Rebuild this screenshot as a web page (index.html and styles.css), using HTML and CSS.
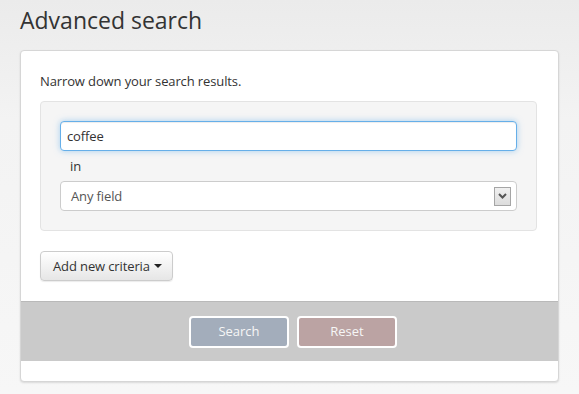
FILE: index.html
```html
<!DOCTYPE html>
<html>
<head>
<meta charset="utf-8">
<link rel="stylesheet" href="styles.css">
</head>
<body>
<h1 class="title">Advanced search</h1>
<div class="card">
  <div class="card-body">
    <p class="intro">Narrow down your search results.</p>
    <div class="well">
      <div class="input">coffee</div>
      <div class="in-label">in</div>
      <div class="select">
        <span>Any field</span>
        <span class="select-arrow">
          <svg width="9" height="6" viewBox="0 0 9 6"><path d="M1 1 L4.5 4.5 L8 1" fill="none" stroke="#555" stroke-width="2"/></svg>
        </span>
      </div>
    </div>
    <button class="btn-add">Add new criteria <span class="caret"></span></button>
  </div>
  <div class="card-footer">
    <button class="btn btn-search">Search</button>
    <button class="btn btn-reset">Reset</button>
  </div>
  <div class="card-bottom"></div>
</div>
</body>
</html>
```
FILE: styles.css
```css
html, body {
  margin: 0;
  padding: 0;
}
body {
  width: 579px;
  height: 394px;
  overflow: hidden;
  box-sizing: border-box;
  padding: 0 20px 0 20px;
  background: linear-gradient(to bottom, #ebebeb 0px, #f3f3f3 120px, #f7f7f7 394px);
  font-family: "Open Sans", "DejaVu Sans", sans-serif;
  color: #333;
}
.title {
  margin: 0 0 15px 0;
  padding-top: 5px;
  font-size: 23px;
  font-weight: 400;
  line-height: 30px;
  color: #333;
}
.card {
  width: 539px;
  box-sizing: border-box;
  background: #fff;
  border: 1px solid #d6d6d6;
  border-radius: 4px;
  box-shadow: 0 1px 2px rgba(0,0,0,0.12);
  overflow: hidden;
}
.card-body {
  padding: 21px 21px 20px 19px;
}
.intro {
  margin: 0 0 11px 0;
  font-size: 13px;
  line-height: 18px;
  letter-spacing: -0.12px;
  color: #333;
}
.well {
  background: #f5f5f5;
  border: 1px solid #e3e3e3;
  border-radius: 4px;
  padding: 19px 19px 19px 19px;
}
.input {
  height: 30px;
  box-sizing: border-box;
  background: #fff;
  border: 1px solid #66afe9;
  border-radius: 4px;
  box-shadow: inset 0 1px 1px rgba(0,0,0,0.075), 0 0 6px rgba(102,175,233,0.55);
  padding: 0 6px;
  font-size: 13px;
  line-height: 28px;
  letter-spacing: -0.12px;
  color: #333;
}
.in-label {
  margin: 6px 0;
  padding-left: 10px;
  font-size: 13px;
  line-height: 18px;
  color: #333;
}
.select {
  height: 30px;
  box-sizing: border-box;
  background: #fff;
  border: 1px solid #ccc;
  border-radius: 4px;
  padding: 0 5px 0 10px;
  display: flex;
  align-items: center;
  justify-content: space-between;
  font-size: 13px;
  letter-spacing: -0.12px;
  color: #555;
}
.select-arrow {
  width: 17px;
  height: 19px;
  box-sizing: border-box;
  border: 1px solid #a5a5a5;
  background: linear-gradient(to bottom, #f0f0f0, #dcdcdc);
  display: flex;
  align-items: center;
  justify-content: center;
}
.btn-add {
  margin-top: 20px;
  height: 30px;
  box-sizing: border-box;
  padding: 0 10px 0 12px;
  border: 1px solid #ccc;
  border-radius: 4px;
  background: linear-gradient(to bottom, #ffffff, #e6e6e6);
  box-shadow: 0 1px 1px rgba(0,0,0,0.08);
  font-family: "Open Sans", "DejaVu Sans", sans-serif;
  font-size: 13px;
  letter-spacing: -0.12px;
  color: #333;
  display: flex;
  align-items: center;
  gap: 4px;
}
.caret {
  display: inline-block;
  width: 0;
  height: 0;
  border-left: 4px solid transparent;
  border-right: 4px solid transparent;
  border-top: 4px solid #222;
}
.card-footer {
  height: 60px;
  box-sizing: border-box;
  background: #cacaca;
  border-top: 1px solid #b9b9b9;
  display: flex;
  align-items: center;
  justify-content: center;
  gap: 8px;
  padding-left: 7px;
}
.btn {
  width: 100px;
  height: 32px;
  box-sizing: border-box;
  border: 2px solid #fff;
  border-radius: 4px;
  font-family: "Open Sans", "DejaVu Sans", sans-serif;
  font-size: 13px;
  line-height: 26px;
  color: #f6f6f6;
  padding: 0 0 1px 0;
}
.btn-search {
  background: #a3adbb;
}
.btn-reset {
  background: #bba3a3;
}
.card-bottom {
  height: 20px;
}
```
